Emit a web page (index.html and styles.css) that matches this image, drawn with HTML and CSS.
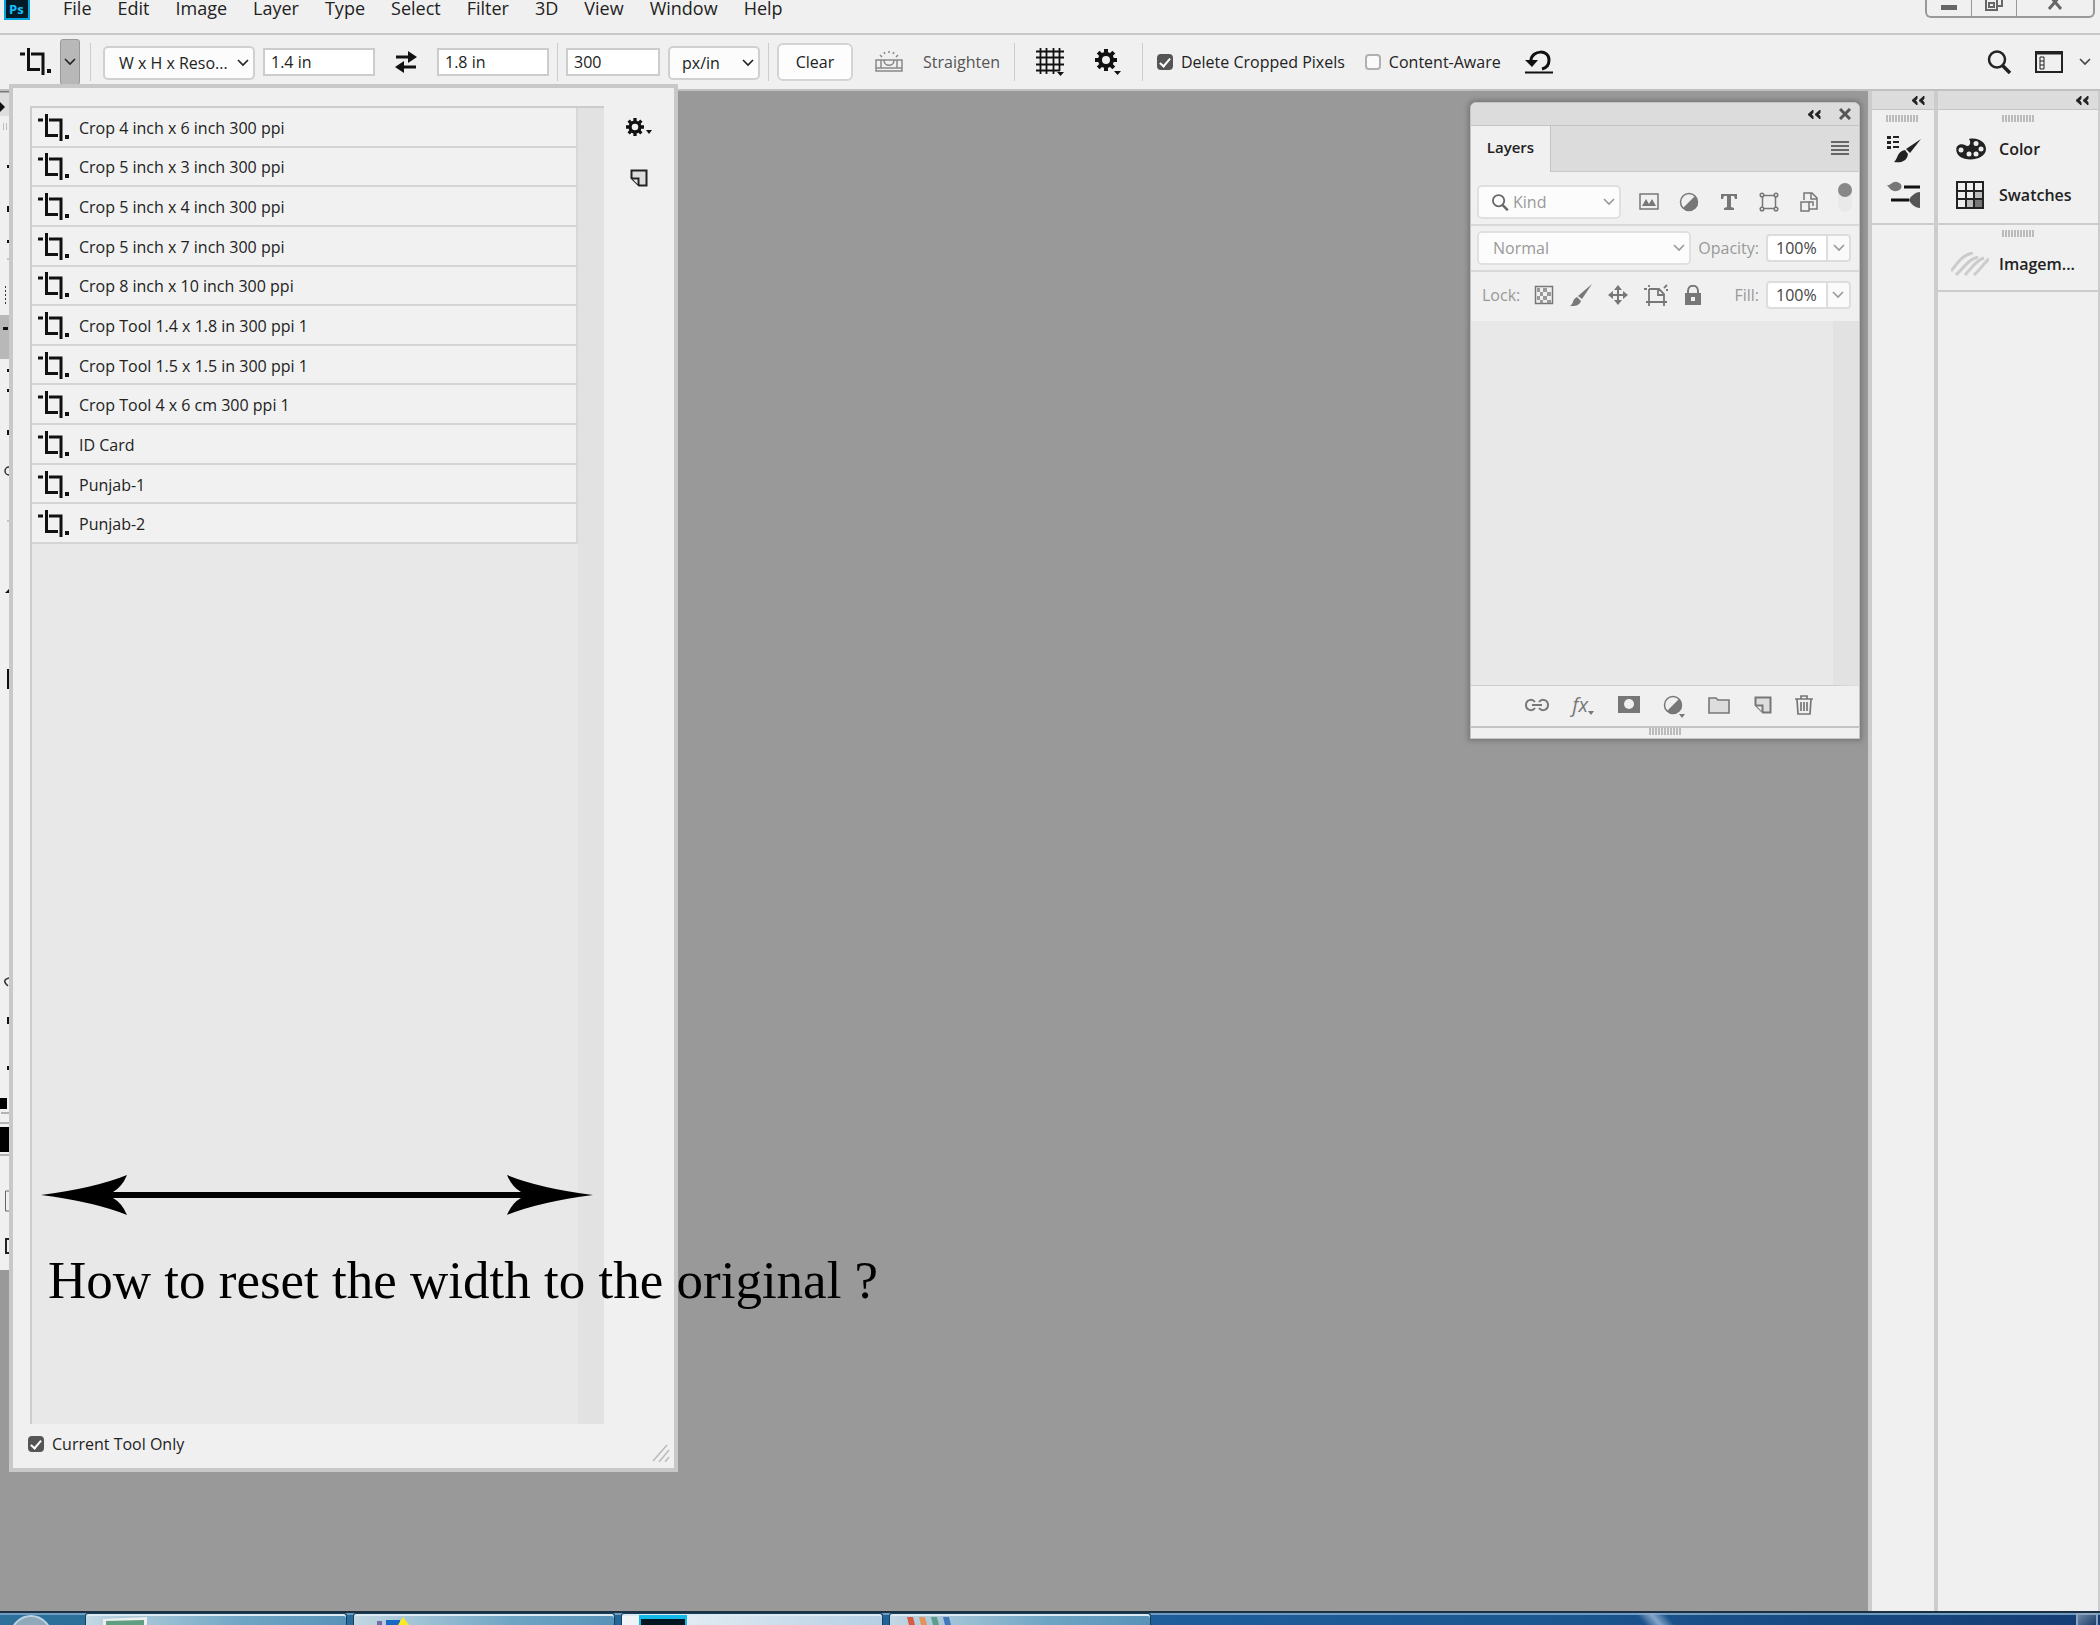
FILE: index.html
```html
<!DOCTYPE html>
<html lang="en">
<head>
<meta charset="UTF-8">
<meta name="viewport" content="width=device-width, initial-scale=1.0">
<title>Crop Tool Presets</title>
<link rel="stylesheet" href="styles.css">
</head>
<body>
    <!-- Shared icons -->
    <svg class="defs" aria-hidden="true">
        <symbol id="crop" viewBox="0 0 32 28">
            <path d="M0 6h5M8.500 0v21.500H20M11 6h12v21" fill="none" stroke="#111" stroke-width="3"/>
            <path d="M27 21h4v4h-4z" fill="#111"/>
        </symbol>
        <symbol id="chevron" viewBox="0 0 12 8">
            <path d="M1 1l5 5 5-5" fill="none" stroke="currentColor" stroke-width="1.600"/>
        </symbol>
        <symbol id="collapse" viewBox="0 0 14 9">
            <path d="M6 0L1 4.500 6 9V6.500L4.500 4.500 6 2.500zM13 0L8 4.500l5 4.500V6.500l-1.500-2 1.500-2z" fill="#222" stroke="#222"/>
        </symbol>
        <symbol id="gear" viewBox="0 0 22 22">
            <circle cx="11" cy="11" r="6" fill="none" stroke="#111" stroke-width="4"/>
            <path d="M11 0v4M11 18v4M0 11h4M18 11h4M3.200 3.200l3 3M15.800 15.800l3 3M3.200 18.800l3-3M15.800 6.200l3-3" stroke="#111" stroke-width="4"/>
        </symbol>
        <symbol id="newitem" viewBox="0 0 18 18">
            <path d="M1.500 1.500h15v15H9L1.500 9z" fill="#ddd" stroke="currentColor" stroke-width="2"/>
            <path d="M2 9.500h6.500V16" fill="#f0f0f0" stroke="currentColor" stroke-width="2"/>
        </symbol>
        <symbol id="halfcircle" viewBox="0 0 20 20">
            <circle cx="10" cy="10" r="8.500" fill="#f0f0f0" stroke="#777" stroke-width="1.500"/>
            <path d="M16 4A8.500 8.500 0 1 1 4 16z" fill="#777"/>
        </symbol>
        <symbol id="lens" viewBox="0 0 24 24">
            <circle cx="10" cy="9.500" r="8" fill="none" stroke="currentColor" stroke-width="2.500"/>
            <path d="M15.500 15.500L23 23" stroke="currentColor" stroke-width="3.500"/>
        </symbol>
    </svg>

    <header class="menubar">
        <svg class="logo" viewBox="0 0 26 20">
            <path d="M0 0h26v20H0z" fill="#00a7e0"/>
            <path d="M2 0h22v18H2z" fill="#031b26"/>
            <text x="5" y="14" class="logo-text">Ps</text>
        </svg>
        <nav class="menu">
            <a href="#">File</a>
            <a href="#">Edit</a>
            <a href="#">Image</a>
            <a href="#">Layer</a>
            <a href="#">Type</a>
            <a href="#">Select</a>
            <a href="#">Filter</a>
            <a href="#">3D</a>
            <a href="#">View</a>
            <a href="#">Window</a>
            <a href="#">Help</a>
        </nav>
        <div class="window-buttons">
            <button aria-label="Minimize"><svg width="18" height="16"><path d="M1 5h16v5H1z" fill="#666"/></svg></button>
            <button aria-label="Restore"><svg width="20" height="16"><path d="M2 0v10h11V0M5 3h5v4H5zM13 6h5V0" fill="none" stroke="#666" stroke-width="2"/></svg></button>
            <button aria-label="Close" class="close"><svg width="18" height="16"><path d="M3 9l6-7 6 7M5-3l4 5 4-5" fill="none" stroke="#666" stroke-width="3"/></svg></button>
        </div>
    </header>

    <form class="options">
        <svg class="tool-icon" width="32" height="28"><use href="#crop"/></svg>
        <button type="button" class="preset-toggle" aria-label="Tool presets"><svg width="12" height="8"><use href="#chevron"/></svg></button>
        <span class="sep first"></span>
        <div class="select ratio">
            <select aria-label="Ratio"><option>W x H x Reso...</option></select>
            <svg width="12" height="8"><use href="#chevron"/></svg>
        </div>
        <input class="size" type="text" value="1.4 in" aria-label="Width">
        <button type="button" class="plain swap" aria-label="Swap width and height">
            <svg width="24" height="22" viewBox="0 0 24 22"><path d="M2 6h13M9 16h13" stroke="#111" stroke-width="3"/><path d="M14 0l9 6-9 6zM10 10l-9 6 9 6z" fill="#111"/></svg>
        </button>
        <input class="size" type="text" value="1.8 in" aria-label="Height">
        <span class="sep"></span>
        <input class="resolution" type="text" value="300" aria-label="Resolution">
        <div class="select unit">
            <select aria-label="Resolution unit"><option>px/in</option></select>
            <svg width="12" height="8"><use href="#chevron"/></svg>
        </div>
        <span class="sep"></span>
        <button type="button" class="clear">Clear</button>
        <button type="button" class="plain straighten">
            <svg width="28" height="22" viewBox="0 0 28 22"><path d="M1 9h26v11H1zM1 17h26M6 9v8M22 9v8M9 9c0 7 10 7 10 0" fill="none" stroke="#888" stroke-width="1.500"/><path d="M5 4l2 2M9 1l1 2M14 0v2M19 1l-1 2M23 4l-2 2" stroke="#888" stroke-width="1.500"/></svg>
            Straighten
        </button>
        <span class="sep"></span>
        <button type="button" class="plain grid-button" aria-label="Overlay options">
            <svg width="28" height="30" viewBox="0 0 28 30"><path d="M10.500 1v26M17.500 1v26M0 10.500h28M0 17.500h28M4.500 1v26M23.500 1v23M0 4.500h28M0 23.500h24" fill="none" stroke="#111" stroke-width="1.800"/><path d="M21 25h7l-3.500 4z" fill="#111"/></svg>
        </button>
        <button type="button" class="plain gear-button" aria-label="Crop options">
            <svg width="26" height="28" viewBox="0 0 26 28"><use href="#gear" x="0" y="1" width="22" height="22"/><path d="M19 23h7l-3.500 4z" fill="#111"/></svg>
        </button>
        <span class="sep"></span>
        <label class="check"><input type="checkbox" checked>Delete Cropped Pixels</label>
        <label class="check aware"><input type="checkbox">Content-Aware</label>
        <button type="button" class="plain" aria-label="Reset crop">
            <svg width="28" height="24" viewBox="0 0 28 24"><path d="M6 13V10C7 0 24-1 24 10c0 5-3 8-7 9" fill="none" stroke="#111" stroke-width="3"/><path d="M0 10h13l-6 7z" fill="#111"/><path d="M0 22.500h28" stroke="#111" stroke-width="2"/></svg>
        </button>
        <div class="options-right">
            <button type="button" class="plain" aria-label="Search"><svg width="24" height="24"><use href="#lens"/></svg></button>
            <button type="button" class="plain" aria-label="Workspace">
                <svg width="28" height="22" viewBox="0 0 28 22"><path d="M1 1h26v20H1z" fill="none" stroke="#222" stroke-width="2"/><path d="M1 2h26" stroke="#222" stroke-width="3"/><path d="M5 6h4v12H5zM5 10h4M5 14h4" fill="none" stroke="#222"/></svg>
            </button>
            <svg width="12" height="8"><use href="#chevron"/></svg>
        </div>
    </form>

    <main class="workspace">
        <aside class="toolbox">
            <!-- Only the left edge of the tools shows beside the preset panel -->
            <svg width="9" height="1179" viewBox="0 0 9 1179">
                <path d="M0 0h9v25H0z" fill="#ddd"/>
                <path d="M0 .500h9" stroke="#777" stroke-width="2"/>
                <path d="M0 11l5 5-5 5z" fill="#111"/>
                <path d="M3.500 32v7M6.500 32v7" stroke="#bbb"/>
                <path d="M0 224h9v44H0z" fill="#b8b8b8"/>
                <path d="M7 74h2v3H7zM7 115h2v6H7zM7 149h2v3H7zM3 236h5v3H3zM7 278h2v3H7zM7 298h2v3H7zM7 339h2v5H7zM5 502l4-4v4zM7 578h2v20H7zM7 926h2v7H7zM7 975h2v4H7z" fill="#111"/>
                <path d="M7 168h2M7 430h2" stroke="#999"/>
                <path d="M5.500 195v18" stroke="#333" stroke-dasharray="2 2"/>
                <path d="M9 376a4 4 0 0 0 0 8M9 887q-8 2-1 8" fill="none" stroke="#333" stroke-width="1.500"/>
                <path d="M0 1007h7v11H0zM0 1036h9v25H0z" fill="#000"/>
                <path d="M1 1022h8M0 1032h9M0 1064h9" stroke="#777"/>
                <path d="M9 1100H5.500v20H9" fill="none" stroke="#666"/>
                <path d="M9 1148H6v14H9" fill="none" stroke="#222" stroke-width="2"/>
            </svg>
        </aside>

        <div class="canvas">
            <section class="layers">
                <div class="layers-bar">
                    <svg width="14" height="9"><use href="#collapse"/></svg>
                    <button class="plain" aria-label="Close panel"><svg width="12" height="12"><path d="M1 1l10 10M11 1L1 11" stroke="#555" stroke-width="3"/></svg></button>
                </div>
                <div class="tabs">
                    <button class="tab">Layers</button>
                    <button class="plain" aria-label="Panel menu"><svg width="18" height="14"><path d="M0 1h18M0 5h18M0 9h18M0 13h18" stroke="#666" stroke-width="2"/></svg></button>
                </div>
                <div class="layer-row kind-row">
                    <div class="select kind">
                        <svg class="kind-lens" width="18" height="17"><use href="#lens"/></svg>
                        <select aria-label="Filter type"><option>Kind</option></select>
                        <svg width="12" height="8"><use href="#chevron"/></svg>
                    </div>
                    <div class="filters">
                        <svg width="20" height="20" viewBox="0 0 20 20"><path d="M1 2h18v15H1z" fill="none" stroke="#777" stroke-width="1.500"/><path d="M3 14l4-7 3 5 3-5 4 7z" fill="#777"/></svg>
                        <svg width="20" height="20"><use href="#halfcircle"/></svg>
                        <svg width="20" height="20" viewBox="0 0 20 20"><path d="M2 2h16v5h-2l-1-3h-3v11l3 1v2H5v-2l3-1V4H5L4 7H2z" fill="#777"/></svg>
                        <svg width="20" height="20" viewBox="0 0 20 20"><path d="M3.500 5v10M16.500 5v10M5 3.500h10M5 16.500h10" stroke="#777" stroke-width="1.500"/><g fill="#f0f0f0" stroke="#777" stroke-width="1.500"><circle cx="3" cy="3" r="1.800"/><circle cx="17" cy="3" r="1.800"/><circle cx="3" cy="17" r="1.800"/><circle cx="17" cy="17" r="1.800"/></g></svg>
                        <svg width="20" height="20" viewBox="0 0 20 20"><path d="M5 8V1h8l5 5v11h-8M12 1v6h6M10 10h4v4" fill="none" stroke="#777" stroke-width="1.500"/><path d="M2 10h8v9H2z" fill="#f0f0f0" stroke="#777" stroke-width="1.500"/></svg>
                    </div>
                    <svg class="toggle" width="16" height="32" viewBox="0 0 16 32"><rect x="1" y="2" width="14" height="28" rx="7" fill="#e9e9e9"/><circle cx="8" cy="8" r="7" fill="#888"/></svg>
                </div>
                <div class="layer-row">
                    <div class="select blend">
                        <select aria-label="Blend mode"><option>Normal</option></select>
                        <svg width="12" height="8"><use href="#chevron"/></svg>
                    </div>
                    <div class="percent">
                        <label for="opacity">Opacity:</label>
                        <input id="opacity" type="text" value="100%">
                        <button aria-label="Opacity slider"><svg width="12" height="8"><use href="#chevron"/></svg></button>
                    </div>
                </div>
                <div class="layer-row lock-row">
                    <span>Lock:</span>
                    <div class="locks">
                        <svg width="20" height="20" viewBox="0 0 20 20"><path d="M1.500 1.500h17v17h-17z" fill="#f0f0f0" stroke="#777" stroke-width="1.500"/><path d="M3 3h3v4H3zM9 3h4v4H9zM6 7h3v4H6zM13 7h4v4h-4zM3 11h3v4H3zM9 11h4v4H9zM6 15h3v3H6zM13 15h4v3h-4z" fill="#999"/></svg>
                        <svg width="22" height="22" viewBox="0 0 22 22"><path d="M22 0L12 15l-4-3z" fill="#777"/><path d="M7 13l4 4c-2 5-6 5-11 5 4-2 2-7 7-9z" fill="#777"/></svg>
                        <svg width="20" height="20" viewBox="0 0 20 20"><path d="M10 3v14M3 10h14" stroke="#777" stroke-width="2"/><path d="M10 0l4 5H6zM10 20l4-5H6zM0 10l5-4v8zM20 10l-5-4v8z" fill="#777"/></svg>
                        <svg width="24" height="22" viewBox="0 0 24 22"><path d="M0 5h3M5 1v2M5 5v17M2 18h21M5 5h10l5 5v12M14 5v6h6M20 4l3-3M22 6h2" fill="none" stroke="#777" stroke-width="1.800"/></svg>
                        <svg width="18" height="20" viewBox="0 0 18 20"><path d="M4 9V6c0-7 10-7 10 0v3" fill="none" stroke="#777" stroke-width="2"/><path d="M1 8h16v12H1zM7 12v4h4v-4z" fill="#777" fill-rule="evenodd"/></svg>
                    </div>
                    <div class="percent">
                        <label for="fill">Fill:</label>
                        <input id="fill" type="text" value="100%">
                        <button aria-label="Fill slider"><svg width="12" height="8"><use href="#chevron"/></svg></button>
                    </div>
                </div>
                <div class="layer-list"></div>
                <div class="layer-actions">
                    <svg width="24" height="24" viewBox="0 0 24 24"><path d="M10 9C7 5 1 7 1 12s6 7 9 3M14 9c3-4 9-2 9 3s-6 7-9 3M7 12h10" fill="none" stroke="#777" stroke-width="2"/></svg>
                    <span class="fx">fx<svg width="6" height="4"><path d="M0 0h6L3 4z" fill="#777"/></svg></span>
                    <svg width="22" height="24" viewBox="0 0 22 24"><path d="M0 3h22v17H0z" fill="#777"/><circle cx="11" cy="11" r="5" fill="#f0f0f0"/></svg>
                    <svg width="22" height="26" viewBox="0 0 22 26"><use href="#halfcircle" x="0" y="3" width="20" height="20"/><path d="M16 22h6l-3 4z" fill="#777"/></svg>
                    <svg width="22" height="24" viewBox="0 0 22 24"><path d="M1 5h7l2 2h11v13H1z" fill="#ddd" stroke="#777" stroke-width="1.600"/></svg>
                    <svg width="18" height="18"><use href="#newitem"/></svg>
                    <svg width="18" height="20" viewBox="0 0 18 20"><path d="M0 4h18M6 4V1h6v3M2 4l1 15h12l1-15M6 7v9M9 7v9M12 7v9" fill="none" stroke="#777" stroke-width="1.700"/></svg>
                </div>
                <div class="layers-grip"><span class="grip"></span></div>
            </section>
        </div>

        <aside class="dock narrow">
            <div class="dock-bar"><svg width="14" height="9"><use href="#collapse"/></svg></div>
            <div class="dock-group">
                <span class="grip"></span>
                <button class="dock-item" aria-label="Brush presets">
                    <svg width="34" height="28" viewBox="0 0 34 28"><path d="M0 1h4v3H0zM0 6h4v3H0zM0 11h4v3H0zM6 1h6v2H6zM6 6h6v2H6zM6 11h6v2H6z" fill="#222"/><path d="M34 4L23 18l-4-4zM18 15l3 4c-1 8-8 9-14 8 4-3 3-11 11-12z" fill="#222"/></svg>
                </button>
                <button class="dock-item" aria-label="Brush settings">
                    <svg width="34" height="28" viewBox="0 0 34 28"><path d="M17 6h16M4 19h18" stroke="#111" stroke-width="3"/><path d="M0 4c4 1 5-4 10-3 6 1 6 8 0 9-5 1-8-3-10-6z" fill="#777"/><path d="M22 19c1-3 6-8 11-8v16c-5 0-10-5-11-8z" fill="#555"/></svg>
                </button>
            </div>
        </aside>
        <aside class="dock wide">
            <div class="dock-bar"><svg width="14" height="9"><use href="#collapse"/></svg></div>
            <div class="dock-group">
                <span class="grip"></span>
                <button class="dock-item">
                    <svg width="30" height="22" viewBox="0 0 30 22"><path d="M13 1c10-2 17 4 17 10 0 12-25 14-29 4-3-8 4-10 8-8 4 3 7-2 4-6z" fill="#222"/><g fill="#eee"><circle cx="5" cy="12" r="2.500"/><circle cx="13" cy="16" r="2.500"/><circle cx="20" cy="16" r="2.500"/><circle cx="25" cy="11" r="2.500"/><circle cx="20" cy="5.500" r="2.500"/></g></svg>
                    Color
                </button>
                <button class="dock-item">
                    <svg width="30" height="28" viewBox="0 0 30 28"><path d="M1 1h26v26H1z" fill="#eee"/><path d="M10 18h8v9h-8zM18 10h9v8h-9z" fill="#bbb"/><path d="M18 18h9v9h-9z" fill="#777"/><path d="M1 1h26v26H1zM10 1v26M18 1v26M1 10h26M1 18h26" fill="none" stroke="#222" stroke-width="2"/></svg>
                    Swatches
                </button>
            </div>
            <div class="dock-group single">
                <span class="grip"></span>
                <button class="dock-item">
                    <svg width="38" height="24" viewBox="0 0 38 24"><path d="M0 19C6 12 12 2 22 1M5 23C12 17 17 7 27 5M14 23C20 17 25 8 33 6M23 23C29 18 33 11 38 7" fill="none" stroke="#ccc" stroke-width="3"/></svg>
                    Imagem...
                </button>
            </div>
        </aside>
    </main>

    <!-- Preset drop-down, opened from the options bar -->
    <section class="presets">
        <div class="presets-body">
            <div class="preset-list">
                <ul>
                    <li><svg width="32" height="28"><use href="#crop"/></svg>Crop 4 inch x 6 inch 300 ppi</li>
                    <li><svg width="32" height="28"><use href="#crop"/></svg>Crop 5 inch x 3 inch 300 ppi</li>
                    <li><svg width="32" height="28"><use href="#crop"/></svg>Crop 5 inch x 4 inch 300 ppi</li>
                    <li><svg width="32" height="28"><use href="#crop"/></svg>Crop 5 inch x 7 inch 300 ppi</li>
                    <li><svg width="32" height="28"><use href="#crop"/></svg>Crop 8 inch x 10 inch 300 ppi</li>
                    <li><svg width="32" height="28"><use href="#crop"/></svg>Crop Tool 1.4 x 1.8 in 300 ppi 1</li>
                    <li><svg width="32" height="28"><use href="#crop"/></svg>Crop Tool 1.5 x 1.5 in 300 ppi 1</li>
                    <li><svg width="32" height="28"><use href="#crop"/></svg>Crop Tool 4 x 6 cm 300 ppi 1</li>
                    <li><svg width="32" height="28"><use href="#crop"/></svg>ID Card</li>
                    <li><svg width="32" height="28"><use href="#crop"/></svg>Punjab-1</li>
                    <li><svg width="32" height="28"><use href="#crop"/></svg>Punjab-2</li>
                </ul>
                <span class="track"></span>
            </div>
            <div class="preset-buttons">
                <button class="plain" aria-label="Preset menu"><svg width="26" height="18" viewBox="0 0 26 18"><use href="#gear" width="18" height="18"/><path d="M20 12h6l-3 4z" fill="#111"/></svg></button>
                <button class="plain" aria-label="New preset"><svg width="18" height="18"><use href="#newitem"/></svg></button>
            </div>
        </div>
        <div class="presets-foot">
            <label class="check"><input type="checkbox" checked>Current Tool Only</label>
            <svg width="18" height="18"><path d="M1 17L15 1M7 18L17 6M13 18l4-5" stroke="#bbb" stroke-width="1.500"/></svg>
        </div>
    </section>

    <div class="note">
        <svg width="552" height="40" viewBox="0 0 552 40"><path d="M0 20Q54 13 86 0Q81 12 72 17H480Q471 12 466 0Q498 13 552 20Q498 27 466 40Q471 28 480 23H72Q81 28 86 40Q54 27 0 20z"/></svg>
        <p>How to reset the width to the original ?</p>
    </div>

    <footer class="taskbar">
        <button class="start" aria-label="Start"></button>
        <button class="task" aria-label="Task 1"><svg width="46" height="8"><path d="M0 2l44-2v8H0z" fill="#eee"/><path d="M3 4l38-1v5H3z" fill="#5f9e82"/></svg></button>
        <button class="task" aria-label="Task 2"><svg width="46" height="8"><path d="M6 4h5v4H6z" fill="#7a68a8"/><path d="M15 3h14v5H15z" fill="#1769c4"/><path d="M32 0l6 8H27z" fill="#fbe922"/></svg></button>
        <button class="task active" aria-label="Task 3"><svg width="48" height="10"><path d="M0 0h48v10H0z" fill="#12b9e8"/><path d="M2 4h44v6H2z" fill="#02161f"/></svg></button>
        <button class="task" aria-label="Task 4"><svg width="46" height="8"><path d="M0 0h6l2 8H2z" fill="#d95b43"/><path d="M12 0h6l2 8h-6z" fill="#e2945a"/><path d="M24 0h6l2 8h-6z" fill="#5e9d8c"/><path d="M36 0h6l2 8h-6z" fill="#4377bb"/></svg></button>
        <span class="glare"></span>
        <button class="desktop" aria-label="Show desktop"></button>
    </footer>
</body>
</html>
```

FILE: styles.css
```css
* {
    box-sizing: border-box;
}

body {
    display: flex;
    flex-direction: column;
    position: relative;
    height: 100vh;
    margin: 0;
    overflow: hidden;
    background-color: #f0f0f0;
    color: #222;
    font-family: "Open Sans", "Noto Sans", sans-serif;
    font-size: 16px;
    line-height: 20px;
}

button,
input,
select {
    margin: 0;
    color: inherit;
    font: inherit;
}

svg {
    display: block;
    flex: none;
}

.defs {
    position: absolute;
    width: 0;
    height: 0;
}

.plain {
    display: flex;
    align-items: center;
    padding: 0;
    border: none;
    background: none;
}

/* Menu bar */
.menubar {
    display: flex;
    flex: none;
    align-items: flex-start;
    height: 35px;
    padding: 0 5px 0 4px;
    border-bottom: 2px solid #c8c8c8;
}

.logo {
    width: 26px;
    height: 20px;
}

.logo-text {
    fill: #12c2ff;
    font-size: 13px;
    font-weight: bold;
}

.menu {
    display: flex;
    flex: 1;
    gap: 26px;
    padding-left: 33px;
    font-size: 18px;
    line-height: 16px;
}

.menu a {
    color: #222;
    text-decoration: none;
}

.window-buttons {
    display: flex;
    height: 18px;
    border: 2px solid #999;
    border-top: none;
    border-radius: 0 0 6px 6px;
}

.window-buttons button {
    display: flex;
    justify-content: center;
    width: 45px;
    padding: 0;
    border: none;
    border-right: 1px solid #999;
    background: none;
}

.window-buttons .close {
    width: 76px;
    border-right: none;
}

/* Options bar */
.options {
    display: flex;
    flex: none;
    align-items: center;
    gap: 8px;
    height: 56px;
    padding: 0 9px 0 20px;
    border-bottom: 2px solid #c0c0c0;
}

.preset-toggle {
    display: flex;
    align-items: center;
    justify-content: center;
    width: 20px;
    height: 46px;
    padding: 0;
    border: 1px solid #999;
    border-radius: 3px;
    background-color: #b8b8b8;
}

.sep {
    flex: none;
    width: 1px;
    height: 38px;
    background-color: #ccc;
}

.sep.first {
    margin: 0 4px 0 2px;
}

.select {
    display: flex;
    position: relative;
    align-items: center;
    height: 34px;
}

.select select {
    width: 100%;
    height: 100%;
    padding: 0 24px 0 14px;
    border: 2px solid #d0d0d0;
    border-radius: 5px;
    appearance: none;
    background-color: #fcfcfc;
}

.select > svg {
    position: absolute;
    right: 6px;
    pointer-events: none;
}

.options .select {
    margin-top: 2px;
}

.ratio {
    width: 152px;
}

.unit {
    width: 92px;
}

.unit select {
    padding-left: 12px;
}

.options input[type="text"] {
    height: 28px;
    padding: 0 6px;
    border: 2px solid #ccc;
    background-color: #fff;
}

.options .size {
    width: 112px;
}

.options .resolution {
    width: 94px;
}

.swap {
    margin: 0 11px;
}

.clear {
    width: 76px;
    height: 38px;
    padding: 0;
    border: 2px solid #d4d4d4;
    border-radius: 6px;
    background-color: #fdfdfd;
}

.straighten {
    gap: 20px;
    margin: 0 6px 0 14px;
    color: #555;
}

.grid-button {
    margin: 0 10px 0 13px;
}

.gear-button {
    margin: 0 13px;
}

.check {
    display: flex;
    align-items: center;
    gap: 8px;
}

.options .check {
    margin-left: 6px;
}

.options .aware {
    margin: 0 16px 0 12px;
}

.check input {
    width: 16px;
    height: 16px;
    border: 2px solid #b0b0b0;
    border-radius: 4px;
    appearance: none;
    background-color: #fafafa;
}

.check input:checked {
    display: flex;
    justify-content: center;
    border-color: #555;
    background-color: #555;
}

.check input:checked::before {
    width: 4px;
    height: 9px;
    border: solid #fff;
    border-width: 0 2px 2px 0;
    content: "";
    transform: rotate(40deg);
}

.options-right {
    display: flex;
    align-items: center;
    gap: 24px;
    margin-left: auto;
}

.options-right > svg {
    margin-left: -8px;
    color: #444;
}

/* Workspace */
.workspace {
    display: flex;
    flex: 1;
    min-height: 0;
    background-color: #999;
}

.toolbox {
    align-self: flex-start;
    background-color: #f0f0f0;
}

.canvas {
    position: relative;
    flex: 1;
}

.layers {
    position: absolute;
    top: 11px;
    right: 8px;
    width: 390px;
    border: 1px solid #c4c4c4;
    border-radius: 6px 6px 0 0;
    background-color: #f0f0f0;
    box-shadow: 0 0 5px 2px #777;
    color: #999;
}

.layers-bar {
    display: flex;
    align-items: center;
    justify-content: flex-end;
    gap: 18px;
    height: 23px;
    padding-right: 8px;
    border-bottom: 1px solid #c4c4c4;
    border-radius: 5px 5px 0 0;
    background-color: #dcdcdc;
}

.tabs {
    display: flex;
    justify-content: space-between;
    height: 46px;
    padding: 0 10px 2px 0;
    background-color: #dcdcdc;
    box-shadow: inset 0 -1px 0 #c8c8c8;
}

.tab {
    width: 80px;
    margin-bottom: -2px;
    padding: 0 0 4px;
    border: none;
    border-right: 1px solid #c4c4c4;
    background-color: #f0f0f0;
    color: #222;
    font-size: 15px;
    font-weight: 600;
}

.layer-row {
    display: flex;
    align-items: center;
    justify-content: space-between;
    height: 46px;
    padding: 0 8px 0 6px;
    border-bottom: 2px solid #d8d8d8;
}

.kind-row {
    height: 54px;
    padding: 8px 6px 0;
}

.lock-row {
    height: 49px;
    padding: 0 8px 4px 11px;
    border-bottom: none;
}

.layers .select select {
    border-color: #e0e0e0;
}

.kind {
    width: 144px;
}

.kind select {
    padding-left: 34px;
}

.kind .kind-lens {
    right: auto;
    left: 14px;
    color: #666;
}

.blend {
    width: 214px;
}

.filters {
    display: flex;
    gap: 20px;
}

.toggle {
    margin-top: -8px;
}

.percent {
    display: flex;
    align-items: center;
}

.percent label {
    margin-right: 7px;
}

.percent input {
    width: 61px;
    height: 28px;
    padding: 0 8px;
    border: 2px solid #ddd;
    border-right-width: 1px;
    border-radius: 4px 0 0 4px;
    background-color: #fff;
    color: #444;
}

.percent button {
    display: flex;
    align-items: center;
    justify-content: center;
    width: 24px;
    height: 28px;
    padding: 0;
    border: 2px solid #ddd;
    border-left-width: 1px;
    border-radius: 0 4px 4px 0;
    background-color: #fafafa;
}

.locks {
    display: flex;
    align-items: center;
    gap: 16px;
    margin-right: 18px;
}

.layer-list {
    height: 365px;
    border-right: 26px solid #e2e2e2;
    border-bottom: 1px solid #ccc;
    background-color: #e8e8e8;
}

.layer-actions {
    display: flex;
    align-items: center;
    justify-content: space-between;
    height: 40px;
    padding: 0 46px 2px 54px;
    color: #777;
}

.fx {
    display: flex;
    align-items: flex-end;
    font-size: 20px;
    font-style: italic;
}

.layers-grip {
    display: flex;
    justify-content: center;
    height: 12px;
    border-top: 2px solid #c4c4c4;
}

.grip {
    width: 32px;
    height: 7px;
    background: repeating-linear-gradient(90deg, #bbb 0 2px, #f0f0f0 2px 3px);
}

/* Docked panels */
.dock {
    border-left: 4px solid #ccc;
    background-color: #f0f0f0;
}

.narrow {
    width: 66px;
}

.wide {
    width: 166px;
    border-right: 2px solid #ccc;
}

.dock-bar {
    display: flex;
    align-items: center;
    justify-content: flex-end;
    height: 19px;
    padding-right: 9px;
    border-bottom: 1px solid #c4c4c4;
    background-color: #dcdcdc;
}

.dock-group {
    display: flex;
    flex-direction: column;
    align-items: center;
    height: 115px;
    padding-top: 5px;
    border-bottom: 2px solid #ccc;
}

.dock-group .grip {
    margin-bottom: 4px;
}

.dock-group.single {
    height: 67px;
}

.narrow .dock-group {
    padding-right: 2px;
}

.dock-item {
    display: flex;
    align-items: center;
    width: 100%;
    height: 46px;
    padding: 0 0 0 15px;
    border: none;
    background: none;
    font-weight: 600;
}

.wide .dock-item {
    gap: 13px;
    padding-left: 18px;
}

.wide .single .dock-item {
    gap: 10px;
    padding-left: 13px;
}

/* Preset drop-down */
.presets {
    display: flex;
    position: absolute;
    top: 84px;
    bottom: 153px;
    left: 9px;
    flex-direction: column;
    width: 669px;
    border: 4px solid #c8c8c8;
    background-color: #f0f0f0;
}

.presets-body {
    display: flex;
    flex: 1;
    padding: 18px 0 0 17px;
}

.preset-list {
    display: flex;
    flex: 1;
    border-top: 2px solid #ccc;
    border-left: 2px solid #ccc;
    background-color: #e8e8e8;
}

.preset-list ul {
    display: grid;
    flex: 1;
    grid-template-rows: repeat(11, 1fr);
    align-self: flex-start;
    height: 436px;
    margin: 0;
    padding: 0;
    list-style: none;
}

.preset-list li {
    display: flex;
    align-items: center;
    gap: 9px;
    padding: 2px 0 0 6px;
    border-right: 2px solid #d8d8d8;
    border-bottom: 2px solid #d4d4d4;
    background-color: #f1f1f1;
}

.track {
    width: 26px;
    background-color: #e2e2e2;
}

.preset-buttons {
    display: flex;
    flex-direction: column;
    align-items: center;
    gap: 33px;
    width: 70px;
    padding-top: 12px;
}

.presets-foot {
    display: flex;
    align-items: flex-start;
    justify-content: space-between;
    height: 44px;
    padding: 10px 4px 6px 15px;
}

.presets-foot svg {
    align-self: flex-end;
}

/* Note drawn over the screen */
.note {
    position: absolute;
    top: 1175px;
    left: 41px;
}

.note p {
    margin: 35px 0 0;
    padding-left: 7px;
    color: #000;
    font-family: "Liberation Serif", "Times New Roman", serif;
    font-size: 53px;
    line-height: 60px;
    white-space: nowrap;
}

/* Taskbar */
.taskbar {
    display: flex;
    flex: none;
    gap: 6px;
    height: 14px;
    overflow: hidden;
    border-top: 2px solid #1c3044;
    background: linear-gradient(90deg, #2b719b, #1d5e9b 55%, #1b568f 75%, #143c73);
    box-shadow: inset 0 2px 0 #6f9bc0;
}

.start {
    width: 42px;
    height: 42px;
    margin: 2px 27px 0 10px;
    padding: 0;
    border: 2px solid #b9d2e2;
    border-radius: 50%;
    background-color: #8fa9ba;
}

.task {
    display: flex;
    align-items: flex-end;
    width: 262px;
    height: 12px;
    padding: 0 0 0 17px;
    border: 1px solid #163f5c;
    border-bottom: none;
    border-radius: 3px 3px 0 0;
    background: linear-gradient(90deg, #c3d8e3, #6fa5c4 60%, #5793b8);
    box-shadow: inset 0 2px 0 #dce9f0;
}

.task.active {
    background: linear-gradient(90deg, #f0f5f8, #b5cfe4);
}

.glare {
    width: 40px;
    height: 12px;
    margin-left: 478px;
    background: linear-gradient(50deg, transparent 20%, #86a6c9 50%, transparent 80%);
}

.desktop {
    width: 22px;
    height: 12px;
    margin: 0 2px 0 auto;
    padding: 0;
    border: 2px solid #8ba3bf;
    border-bottom: none;
    background: linear-gradient(135deg, #6b86a5, #1d3f6b);
}
```
